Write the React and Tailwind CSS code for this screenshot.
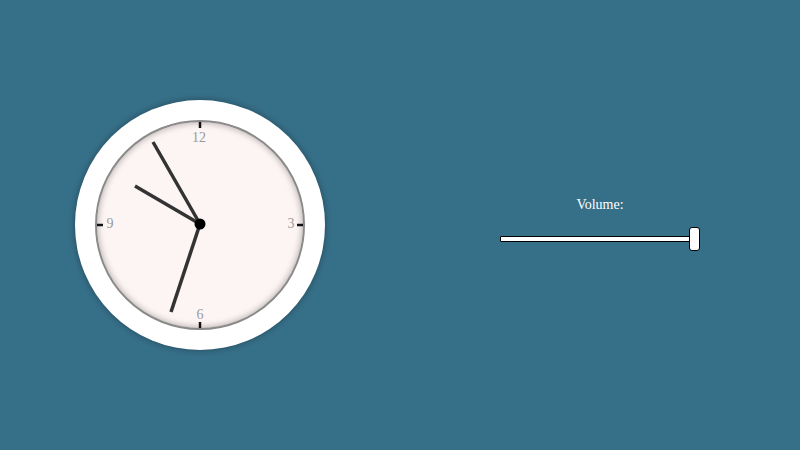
import React from 'react';

const Clock = () => {
  return (
    <div className="w-[250px] h-[250px] rounded-full bg-white shadow-[0_0_6px_rgba(0,0,0,0.35)] flex items-center justify-center">
      <div className="relative w-[210px] h-[210px] rounded-full bg-[#fdf5f3] border-2 border-[#8a8a8a] shadow-[inset_0_0_7px_rgba(0,0,0,0.35)]">
        <svg className="absolute -top-[2px] -left-[2px]" width="210" height="210" viewBox="0 0 210 210">
          {/* ticks */}
          <line x1="105" y1="2" x2="105" y2="8" stroke="#111" strokeWidth="2.5" />
          <line x1="105" y1="202" x2="105" y2="208" stroke="#111" strokeWidth="2.5" />
          <line x1="2" y1="105" x2="8" y2="105" stroke="#111" strokeWidth="2.5" />
          <line x1="202" y1="105" x2="208" y2="105" stroke="#111" strokeWidth="2.5" />
          {/* numbers */}
          <g fill="#9a9a9a" fontFamily="'Liberation Serif', serif" fontSize="14" textAnchor="middle">
            <text x="104" y="22">12</text>
            <text x="196" y="108">3</text>
            <text x="105" y="199">6</text>
            <text x="15" y="108">9</text>
          </g>
          {/* hands */}
          <g stroke="#333" strokeWidth="3.5" strokeLinecap="butt">
            <line x1="105" y1="104" x2="40" y2="66" />
            <line x1="105" y1="104" x2="58" y2="22" />
            <line x1="105" y1="104" x2="76" y2="192" />
          </g>
          <circle cx="105" cy="104" r="5.5" fill="#000" />
        </svg>
      </div>
    </div>
  );
};

const VolumeSlider = () => {
  return (
    <div className="flex flex-col items-center w-[200px]">
      <div className="text-white text-[14px] leading-none font-['Liberation_Serif',serif] mb-[15px]">Volume:</div>
      <div className="relative w-[200px] h-[24px] flex items-center">
        <div className="w-full h-[6px] bg-white border border-black rounded-[1px]" />
        <div className="absolute right-0 top-0 w-[11px] h-[24px] bg-white border border-black rounded-[3px]" />
      </div>
    </div>
  );
};

export default function App() {
  return (
    <div className="w-[800px] h-[450px] bg-[#366f88] flex items-center">
      <div className="ml-[75px]">
        <Clock />
      </div>
      <div className="ml-[175px] -mt-[2px]">
        <VolumeSlider />
      </div>
    </div>
  );
}
